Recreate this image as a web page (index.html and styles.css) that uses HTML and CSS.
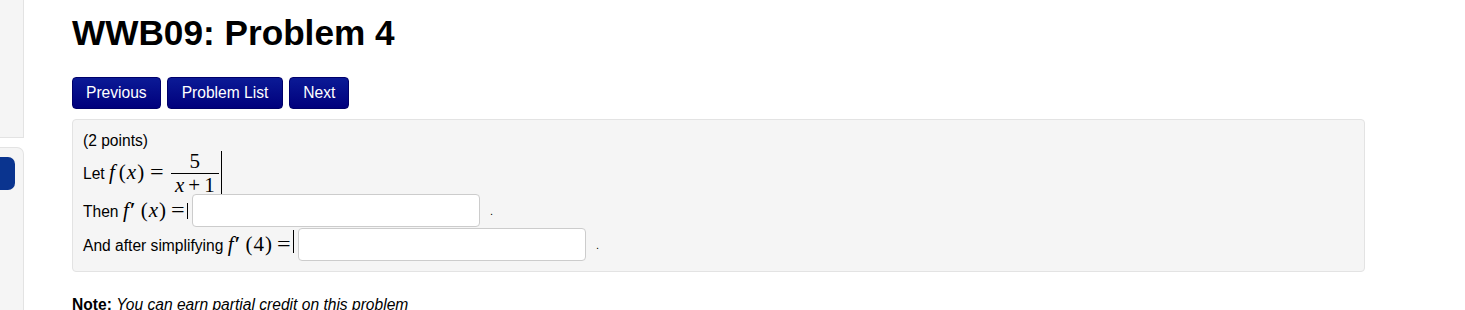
FILE: index.html
```html
<!DOCTYPE html>
<html lang="en">
<head>
  <meta charset="UTF-8" />
  <title>WWB09: Problem 4</title>
  <link rel="stylesheet" href="styles.css">
</head>
<body>

  <!-- left sidebar (mostly hidden off screen) -->
  <div class="sidebar">
    <div class="side-top"></div>
    <div class="side-nav">
      <div class="side-pill"></div>
    </div>
  </div>

  <div class="main">
    <h1 class="problem-title">WWB09: Problem 4</h1>

    <div class="nav-buttons">
      <button class="nav-btn">Previous</button>
      <button class="nav-btn btn-wide">Problem List</button>
      <button class="nav-btn">Next</button>
    </div>

    <!-- problem text -->
    <div class="well">
      <div class="row row-points">(2 points)</div>

      <div class="row row-let">
        Let <span class="math"><i class="fn">f</i><span class="mo">(</span><i class="var">x</i><span class="mo">)</span><span class="rel">=</span><span class="frac"><span class="num">5</span><span class="den"><i>x</i><span class="bin">+</span>1</span></span></span>
      </div>

      <div class="row row-answer">
        <span class="label">Then <span class="math"><i class="fn-p">f</i><span class="prime">′</span><span class="mo">(</span><i class="var">x</i><span class="mo">)</span><span class="rel">=</span></span></span>
        <span class="caret caret-short"></span>
        <input type="text" class="answer">
        <span class="dot">.</span>
      </div>

      <div class="row row-answer">
        <span class="label">And after simplifying <span class="math"><i class="fn-p">f</i><span class="prime">′</span><span class="mo">(</span><span class="num-in">4</span><span class="mo">)</span><span class="rel">=</span></span></span>
        <span class="caret caret-tall"></span>
        <input type="text" class="answer">
        <span class="dot">.</span>
      </div>
    </div>

    <p class="note"><b>Note:</b> <i>You can earn partial credit on this problem</i></p>
  </div>

</body>
</html>
```

FILE: styles.css
```css
/* ---------------------------------------------
   page
--------------------------------------------- */
html, body {
  overflow: hidden;
}
body {
  margin: 0;
  display: flex;
  font-family: "Liberation Sans", Arial, sans-serif;
  font-size: 15.6px;
  color: #000;
  background: #fff;
}

/* ---------------------------------------------
   sidebar
--------------------------------------------- */
.sidebar {
  width: 24px;
  flex: none;
}
.side-top {
  height: 138px;
  box-sizing: border-box;
  background: #f5f5f5;
  border-right: 1px solid #e3e3e3;
  border-bottom: 1px solid #e3e3e3;
}
.side-nav {
  margin-top: 9px;
  height: 300px;
  box-sizing: border-box;
  padding-top: 9px;
  background: #f5f5f5;
  border: 1px solid #e3e3e3;
  border-left: none;
  border-radius: 0 7px 0 0;
}
.side-pill {
  width: 15px;
  height: 33px;
  background: #0a348f;
  border-radius: 0 7px 7px 0;
}

/* ---------------------------------------------
   main column
--------------------------------------------- */
.main {
  flex: 1;
  margin-left: 48px;
  margin-right: 100px;
}
.problem-title {
  margin: 13px 0 24px;
  font-size: 35.2px;
  line-height: 40px;
  font-weight: bold;
}

.nav-buttons {
  display: flex;
  gap: 6px;
}
.nav-btn {
  font-family: "Liberation Sans", Arial, sans-serif;
  font-size: 15.6px;
  line-height: 18px;
  padding: 6px 13px;
  color: #fff;
  background: linear-gradient(to bottom, #0b1a96, #00007c);
  border: 1px solid #00006a;
  border-radius: 4px;
  cursor: pointer;
}
.btn-wide {
  padding: 6px 14px;
}

/* ---------------------------------------------
   problem box
--------------------------------------------- */
.well {
  margin-top: 10px;
  padding: 11px 10px 10px;
  background: #f5f5f5;
  border: 1px solid #e3e3e3;
  border-radius: 4px;
}
.row {
  line-height: 20px;
}
.row-points {
  height: 20px;
}
.row-let {
  height: 43px;
}
.row-answer {
  display: flex;
  align-items: center;
  height: 34px;
}
.row-answer:last-child {
  height: 33px;
}

/* math (stand-in for MathJax) */
.math {
  font-family: "Liberation Serif", "Times New Roman", serif;
  font-size: 21px;
}
.math i {
  font-style: italic;
}
.fn {
  margin-right: 4px;
}
.fn-p {
  margin-right: 1px;
}
.prime {
  display: inline-block;
  width: 11px;
  font-weight: bold;
}
.var,
.num-in {
  margin: 0 1px;
}
.rel {
  display: inline-block;
  margin: 0 8px 0 7px;
  transform: scaleX(1.15);
}
.row-answer .rel {
  margin: 0 3px 0 6px;
}
.bin {
  margin: 0 4px;
}

.frac {
  display: inline-flex;
  flex-direction: column;
  vertical-align: 11px;
  padding-right: 2px;
  border-right: 1px solid #000;
  text-align: center;
}
.num {
  padding: 0 4px 2px;
  border-bottom: 1px solid #000;
  line-height: 20px;
}
.den {
  padding: 1px 4px 0;
  line-height: 20px;
}

/* answer blanks */
.caret {
  width: 1px;
  background: #000;
  align-self: flex-start;
}
.caret-short {
  height: 16px;
  margin-top: 9px;
}
.caret-tall {
  height: 23px;
  margin-top: 2px;
}
.answer {
  width: 288px;
  height: 33px;
  box-sizing: border-box;
  margin: 0 0 0 4px;
  padding: 4px 6px;
  background: #fff;
  border: 1px solid #ccc;
  border-radius: 4px;
  font-size: 15.6px;
  align-self: flex-start;
}
.dot {
  margin-left: 10px;
  font-size: 11px;
}

.note {
  margin: 23px 0 0;
  line-height: 20px;
}
```
